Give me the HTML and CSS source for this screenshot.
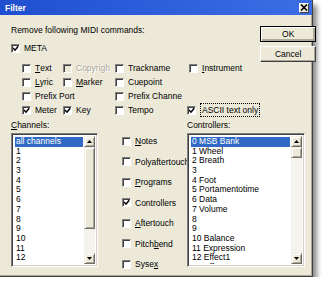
FILE: index.html
```html
<!DOCTYPE html>
<html>
<head>
    <meta charset="UTF-8" />
    <title>Filter</title>
    <link rel="stylesheet" href="styles.css">
</head>
<body>
<div class="dialog">

    <!-- title bar -->
    <div class="titlebar">
        <span class="title">Filter</span>
        <span class="close">
            <svg width="8" height="7" viewBox="0 0 8 7"><path d="M1 0.5 L7 6.5 M7 0.5 L1 6.5" stroke="#000" stroke-width="1.6"/></svg>
        </span>
    </div>

    <div class="content">
        <div class="top">
            <div class="commands">
                <p class="intro">Remove following MIDI commands:</p>
                <label class="cb"><span class="box checked"></span>META</label>

                <div class="cmd-grid">
                    <label class="cb"><span class="box"></span><u>T</u>ext</label>
                    <label class="cb disabled"><span class="box"></span>Copyrigh</label>
                    <label class="cb"><span class="box"></span>Trackname</label>
                    <label class="cb"><span class="box"></span><u>I</u>nstrument</label>

                    <label class="cb"><span class="box"></span><u>L</u>yric</label>
                    <label class="cb"><span class="box"></span><u>M</u>arker</label>
                    <label class="cb"><span class="box"></span>Cuepoint</label>
                    <span></span>

                    <label class="cb wide"><span class="box"></span>Prefix Port</label>
                    <label class="cb"><span class="box"></span>Prefix Channe</label>
                    <span></span>

                    <label class="cb"><span class="box checked"></span>Meter</label>
                    <label class="cb"><span class="box checked"></span>Key</label>
                    <label class="cb"><span class="box"></span>Tempo</label>
                    <label class="cb ascii"><span class="box checked"></span><span class="focus">ASCII text only</span></label>
                </div>
            </div>

            <div class="buttons">
                <button class="btn default">OK</button>
                <button class="btn">Cancel</button>
            </div>
        </div>

        <div class="bottom">
            <!-- channels list -->
            <div class="channels">
                <p class="caption"><u>C</u>hannels:</p>
                <div class="listbox">
                    <ul class="items">
                        <li class="selected">all channels</li>
                        <li>1</li><li>2</li><li>3</li><li>4</li><li>5</li><li>6</li>
                        <li>7</li><li>8</li><li>9</li><li>10</li><li>11</li><li>12</li>
                        <li>13</li>
                    </ul>
                    <div class="scrollbar">
                        <span class="sb-btn"><svg width="5" height="3" viewBox="0 0 5 3"><polygon points="0,3 5,3 2.5,0" fill="#000"/></svg></span>
                        <span class="thumb long"></span>
                        <span class="track"></span>
                        <span class="sb-btn"><svg width="5" height="3" viewBox="0 0 5 3"><polygon points="0,0 5,0 2.5,3" fill="#000"/></svg></span>
                    </div>
                </div>
            </div>

            <!-- message types -->
            <div class="types">
                <label class="cb"><span class="box"></span><u>N</u>otes</label>
                <label class="cb"><span class="box"></span>Polyaftertouch</label>
                <label class="cb"><span class="box"></span><u>P</u>rograms</label>
                <label class="cb"><span class="box checked"></span>Controllers</label>
                <label class="cb"><span class="box"></span><u>A</u>ftertouch</label>
                <label class="cb"><span class="box"></span>Pitch<u>b</u>end</label>
                <label class="cb"><span class="box"></span>Syse<u>x</u></label>
            </div>

            <!-- controllers list -->
            <div class="controllers">
                <p class="caption">Controllers:</p>
                <div class="listbox">
                    <ul class="items">
                        <li class="selected">0 MSB Bank</li>
                        <li>1 Wheel</li>
                        <li>2 Breath</li>
                        <li>3</li>
                        <li>4 Foot</li>
                        <li>5 Portamentotime</li>
                        <li>6 Data</li>
                        <li>7 Volume</li>
                        <li>8</li>
                        <li>9</li>
                        <li>10 Balance</li>
                        <li>11 Expression</li>
                        <li>12 Effect1</li>
                        <li>13 Effect2</li>
                    </ul>
                    <div class="scrollbar">
                        <span class="sb-btn"><svg width="5" height="3" viewBox="0 0 5 3"><polygon points="0,3 5,3 2.5,0" fill="#000"/></svg></span>
                        <span class="thumb short"></span>
                        <span class="track"></span>
                        <span class="sb-btn"><svg width="5" height="3" viewBox="0 0 5 3"><polygon points="0,0 5,0 2.5,3" fill="#000"/></svg></span>
                    </div>
                </div>
            </div>
        </div>
    </div>
</div>
</body>
</html>
```

FILE: styles.css
```css
body {
 margin: 0;
 background-color: #ffffff;
 font-family: "Liberation Sans", Arial, sans-serif;
 font-size: 8.5px;
 color: #000000;
 }

 .dialog {
 width: 312px;
 height: 276px;
 background-color: #ece9d8;
 border-right: 1px solid #404040;
 border-bottom: 1px solid #404040;
 box-shadow: inset -1px -1px #aca899, 4px 5px 5px rgba(0, 0, 0, 0.45);
 }

 .titlebar {
 height: 15px;
 display: flex;
 align-items: center;
 justify-content: space-between;
 padding: 0 3px 0 5px;
 background: linear-gradient(to right, #1f4fd0, #3b6ee6);
 }

 .title {
 color: #ffffff;
 font-weight: bold;
 font-size: 8.5px;
 }

 .close {
 width: 10px;
 height: 10px;
 display: flex;
 align-items: center;
 justify-content: center;
 background-color: #ece9d8;
 box-sizing: border-box;
 border: 1px solid;
 border-color: #ffffff #404040 #404040 #ffffff;
 }

 .content {
 padding: 10px 7px 0 11px;
 }

 .top {
 display: flex;
 }

 .commands {
 flex: 1;
 }

 .intro {
 margin: 0;
 line-height: 10px;
 }

 .cb {
 display: flex;
 align-items: center;
 height: 10px;
 line-height: 10px;
 white-space: nowrap;
 }

 .box {
 width: 9px;
 height: 9px;
 box-sizing: border-box;
 margin-right: 4px;
 flex: none;
 background-color: #ffffff;
 border: 1px solid;
 border-color: #808080 #ffffff #ffffff #808080;
 box-shadow: inset 1px 1px #404040;
 }

 .box.checked {
 background-image: url("data:image/svg+xml;utf8,<svg xmlns='http://www.w3.org/2000/svg' width='7' height='7'><polyline points='1,3 3,5.2 6.2,1.2' fill='none' stroke='black' stroke-width='1.5'/></svg>");
 background-repeat: no-repeat;
 background-position: 0 0;
 }

 .cb.disabled {
 color: #aca899;
 text-shadow: 1px 1px #ffffff;
 }

 .cb.disabled .box {
 background-color: #ece9d8;
 }

 .content > .top .commands > .cb {
 margin-top: 8px;
 }

 .cmd-grid {
 display: grid;
 grid-template-columns: 41px 52px 74px auto;
 grid-auto-rows: 14px;
 align-items: center;
 margin: 8px 0 0 11px;
 }

 .cmd-grid .wide {
 grid-column: span 2;
 }

 .ascii {
 margin-left: -2px;
 }

 .focus {
 border: 1px dotted #000000;
 padding: 1px 1px;
 line-height: 10px;
 }

 .buttons {
 display: flex;
 flex-direction: column;
 gap: 4px;
 margin-top: 1px;
 }

 .btn {
 width: 56px;
 height: 16px;
 padding: 0;
 font-family: inherit;
 font-size: 8.5px;
 color: #000000;
 background-color: #ece9d8;
 border: 1px solid;
 border-color: #ffffff #404040 #404040 #ffffff;
 box-shadow: inset -1px -1px #aca899;
 }

 .btn.default {
 border: 1px solid #000000;
 box-shadow: inset 1px 1px #ffffff, inset -2px -2px #aca899;
 }

 .bottom {
 display: flex;
 margin-top: 3px;
 }

 .caption {
 margin: 0;
 line-height: 10px;
 }

 .channels {
 width: 87px;
 }

 .types {
 width: 65px;
 margin-left: 24px;
 display: flex;
 flex-direction: column;
 gap: 10.5px;
 padding-top: 16px;
 }

 .controllers {
 flex: 1;
 }

 .listbox {
 margin-top: 3px;
 height: 134px;
 box-sizing: border-box;
 display: flex;
 background-color: #ffffff;
 border: 1px solid;
 border-color: #808080 #ffffff #ffffff #808080;
 box-shadow: inset 1px 1px #404040, inset -1px -1px #d4d0c8;
 padding: 2px 2px 2px 2px;
 }

 .items {
 flex: 1;
 list-style: none;
 margin: 0;
 padding: 1px 1px 0 1px;
 overflow: hidden;
 }

 .items li {
 height: 9.7px;
 line-height: 9.7px;
 padding-left: 1px;
 white-space: nowrap;
 }

 .items li.selected {
 background-color: #316ac5;
 color: #ffffff;
 }

 .scrollbar {
 width: 11px;
 display: flex;
 flex-direction: column;
 background-color: #f4f3ee;
 }

 .sb-btn,
 .thumb {
 box-sizing: border-box;
 background-color: #ece9d8;
 border: 1px solid;
 border-color: #f1efe2 #716f64 #716f64 #f1efe2;
 box-shadow: inset 1px 1px #ffffff, inset -1px -1px #aca899;
 }

 .sb-btn {
 height: 11px;
 display: flex;
 align-items: center;
 justify-content: center;
 }

 .thumb.long {
 height: 82px;
 }

 .thumb.short {
 height: 11px;
 }

 .track {
 flex: 1;
 }
```
